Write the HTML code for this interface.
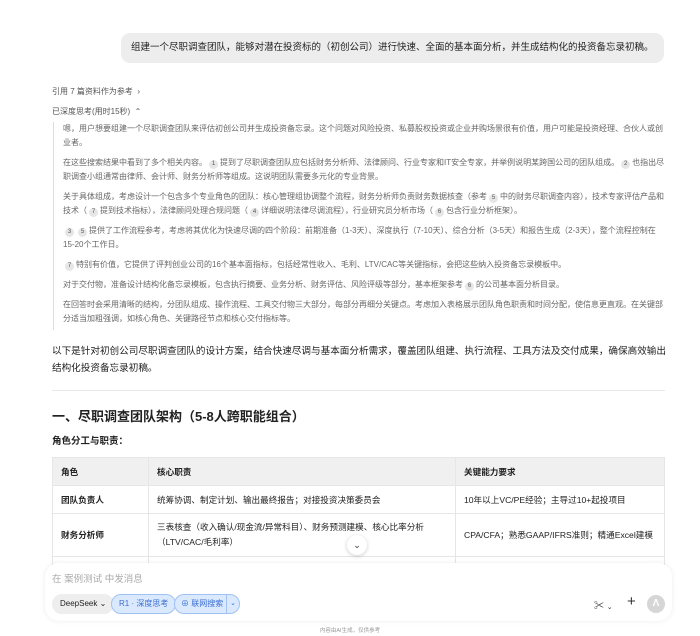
<!DOCTYPE html>
<html><head><meta charset="utf-8"><style>
*{margin:0;padding:0;box-sizing:border-box}
body{width:700px;height:636px;overflow:hidden;background:#fff;font-family:"Liberation Sans","Noto Sans CJK SC",sans-serif;color:#222;position:relative}
.abs{position:absolute}
.bubble{left:121px;top:33px;width:543px;height:30px;background:#ededed;border-radius:9px;font-size:9.5px;line-height:30px;padding-left:10px;color:#222;white-space:nowrap}
.ref{left:52px;top:86px;font-size:8px;color:#555}
.think{left:52px;top:106px;font-size:8px;color:#555}
.tb{left:53px;top:122px;width:612px;border-left:1px solid #ddd;padding-left:9px;font-size:8px;color:#666;line-height:14px;height:208px}
.tb p{margin-bottom:6px}
.n{display:inline-block;width:9px;height:9px;border-radius:50%;background:#e6e6e6;font-size:6px;line-height:9px;text-align:center;color:#555;margin:0 2px;vertical-align:0px}
.main{left:52px;top:343px;width:616px;font-size:9.6px;line-height:17px;color:#222}
.hr{left:52px;top:390px;width:613px;height:1px;background:#e8e8e8}
h1{position:absolute;left:52px;top:406px;font-size:13px;font-weight:bold}
.sub{left:52px;top:433px;font-size:9.5px;font-weight:bold}
table{position:absolute;left:52px;top:457px;width:613px;border-collapse:collapse;font-size:8.6px}
td,th{border:1px solid #e6e6e6;padding:0 8px;text-align:left;vertical-align:middle}
th{background:#f0f0f0;height:28px;font-weight:bold}
td.b{font-weight:bold}
.input{left:45px;top:563px;width:627px;height:58px;background:#fff;border-radius:14px;box-shadow:0 0 6px rgba(0,0,0,.08)}
.ph{left:52px;top:571px;font-size:9.5px;color:#aaa}
.pill{top:594px;height:20px;border-radius:10px;font-size:8px;line-height:18px;padding:0 7px;white-space:nowrap}
.foot{left:0;width:700px;top:626px;text-align:center;font-size:5.5px;color:#999}
</style></head><body>
<div class="abs bubble">组建一个尽职调查团队，能够对潜在投资标的（初创公司）进行快速、全面的基本面分析，并生成结构化的投资备忘录初稿。</div>
<div class="abs ref">引用 7 篇资料作为参考 &nbsp;›</div>
<div class="abs think">已深度思考(用时15秒) &nbsp;⌃</div>
<div class="abs tb">
<p>嗯，用户想要组建一个尽职调查团队来评估初创公司并生成投资备忘录。这个问题对风险投资、私募股权投资或企业并购场景很有价值，用户可能是投资经理、合伙人或创业者。</p>
<p>在这些搜索结果中看到了多个相关内容。<span class="n">1</span>提到了尽职调查团队应包括财务分析师、法律顾问、行业专家和IT安全专家，并举例说明某跨国公司的团队组成。<span class="n">2</span>也指出尽职调查小组通常由律师、会计师、财务分析师等组成。这说明团队需要多元化的专业背景。</p>
<p>关于具体组成，考虑设计一个包含多个专业角色的团队：核心管理组协调整个流程，财务分析师负责财务数据核查（参考<span class="n">5</span>中的财务尽职调查内容），技术专家评估产品和技术（<span class="n">7</span>提到技术指标），法律顾问处理合规问题（<span class="n">4</span>详细说明法律尽调流程），行业研究员分析市场（<span class="n">6</span>包含行业分析框架）。</p>
<p><span class="n">3</span><span class="n">5</span>提供了工作流程参考，考虑将其优化为快速尽调的四个阶段：前期准备（1-3天）、深度执行（7-10天）、综合分析（3-5天）和报告生成（2-3天），整个流程控制在15-20个工作日。</p>
<p><span class="n">7</span>特别有价值，它提供了评判创业公司的16个基本面指标，包括经常性收入、毛利、LTV/CAC等关键指标，会把这些纳入投资备忘录模板中。</p>
<p>对于交付物，准备设计结构化备忘录模板，包含执行摘要、业务分析、财务评估、风险评级等部分，基本框架参考<span class="n">6</span>的公司基本面分析目录。</p>
<p>在回答时会采用清晰的结构，分团队组成、操作流程、工具交付物三大部分，每部分再细分关键点。考虑加入表格展示团队角色职责和时间分配，使信息更直观。在关键部分适当加粗强调，如核心角色、关键路径节点和核心交付指标等。</p>
</div>
<div class="abs main">以下是针对初创公司尽职调查团队的设计方案，结合快速尽调与基本面分析需求，覆盖团队组建、执行流程、工具方法及交付成果，确保高效输出结构化投资备忘录初稿。</div>
<div class="abs hr"></div>
<h1>一、尽职调查团队架构（5-8人跨职能组合）</h1>
<div class="abs sub">角色分工与职责：</div>
<table>
<tr><th style="width:96px">角色</th><th style="width:307px">核心职责</th><th>关键能力要求</th></tr>
<tr style="height:28px"><td class="b">团队负责人</td><td>统筹协调、制定计划、输出最终报告；对接投资决策委员会</td><td>10年以上VC/PE经验；主导过10+起投项目</td></tr>
<tr style="height:43px"><td class="b">财务分析师</td><td style="line-height:15px">三表核查（收入确认/现金流/异常科目）、财务预测建模、核心比率分析（LTV/CAC/毛利率）</td><td>CPA/CFA；熟悉GAAP/IFRS准则；精通Excel建模</td></tr>
<tr style="height:30px"><td></td><td></td><td></td></tr>
</table>
<div class="abs" style="left:347px;top:535px;width:20px;height:20px;border-radius:50%;background:#fff;box-shadow:0 1px 4px rgba(0,0,0,.2);font-size:9px;text-align:center;line-height:20px;color:#333">⌄</div>
<div class="abs input"></div>
<div class="abs ph">在 案例测试 中发消息</div>
<div class="abs pill" style="left:52px;background:#eee;color:#222;border:1px solid #eee">DeepSeek ⌄</div>
<div class="abs pill" style="left:111px;background:#dbe9ff;border:1px solid #9fc2f5;color:#3a6fd0">R1 · 深度思考</div>
<div class="abs pill" style="left:174px;width:66px;padding:0 0 0 6px;background:#dbe9ff;border:1px solid #9fc2f5;color:#3a6fd0">⊕ 联网搜索<span style="position:absolute;right:0;top:0;width:13px;height:18px;border-left:1px solid #9fc2f5;text-align:center;font-size:7px">⌄</span></div>
<div class="abs" style="left:594px;top:597px;font-size:10px;color:#333;white-space:nowrap">✂ <span style="font-size:7px">⌄</span></div>
<div class="abs" style="left:627px;top:593px;font-size:15px;color:#333">+</div>
<div class="abs" style="left:647px;top:595px;width:18px;height:18px;border-radius:50%;background:#d6d6d6;color:#fff;font-size:10px;text-align:center;line-height:18px;font-weight:bold">Λ</div>
<div class="abs foot">内容由AI生成，仅供参考</div>
</body></html>
